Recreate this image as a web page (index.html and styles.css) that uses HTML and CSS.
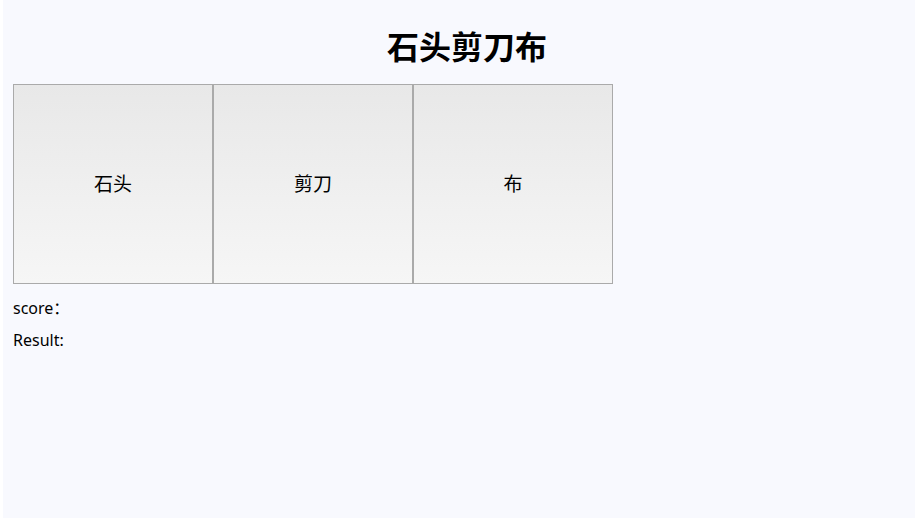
FILE: index.html
```html
<!DOCTYPE html>
<html lang="zh">
<head>
<meta charset="utf-8">
<title>石头剪刀布</title>
<link rel="stylesheet" href="styles.css">
</head>
<body>
<div class="page">
  <h1 class="title">石头剪刀布</h1>
  <div class="choices">
    <div class="choice">石头</div>
    <div class="choice">剪刀</div>
    <div class="choice">布</div>
  </div>
  <p class="line">score：</p>
  <p class="line">Result:</p>
</div>
</body>
</html>
```

FILE: styles.css
```css
html, body {
  margin: 0;
  padding: 0;
  background: #ffffff;
}
body {
  padding: 0 1px 13px 3px;
  font-family: "Noto Sans", "Noto Sans CJK SC", sans-serif;
  color: #000;
}
.page {
  background: #f8f9fe;
  height: 518px;
  padding: 0 10px;
  box-sizing: border-box;
  overflow: hidden;
}
.title {
  margin: 0 0 18px;
  padding: 24px 0 0 16px;
  text-align: center;
  font-size: 32px;
  line-height: 42px;
  font-weight: bold;
  font-family: "Noto Sans CJK SC", sans-serif;
}
.choices {
  display: flex;
}
.choice {
  width: 200px;
  height: 200px;
  box-sizing: border-box;
  border: 1px solid #aaaaaa;
  background: linear-gradient(to bottom, #e8e8e8, #f6f6f6);
  display: flex;
  align-items: center;
  justify-content: center;
  padding-bottom: 3px;
  font-size: 19px;
  font-family: "Noto Sans CJK SC", sans-serif;
}
.line {
  margin: 0;
  font-size: 16px;
  line-height: 32px;
}
.choices + .line {
  margin-top: 8px;
}
```
